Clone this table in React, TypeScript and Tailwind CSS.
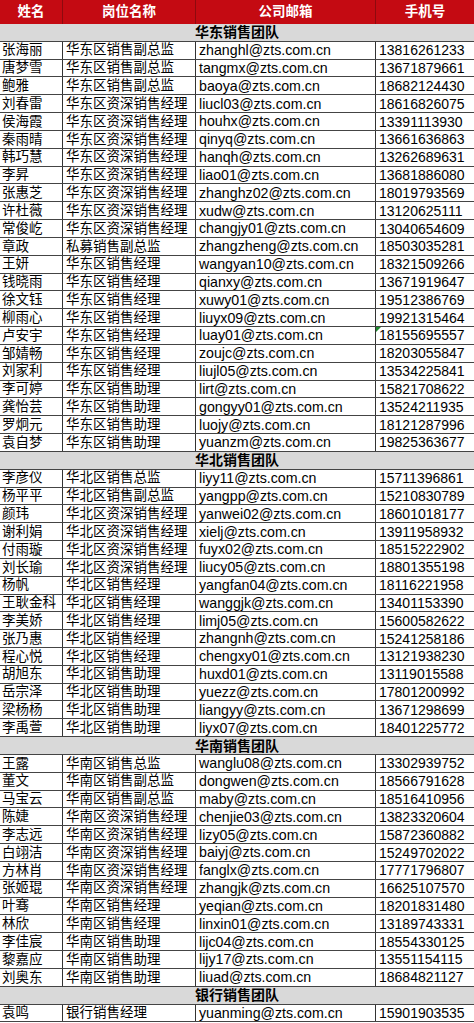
import React from "react";

type Row = [string, string, string, string];

const groups: { title: string; rows: Row[] }[] = [
  {
    title: "华东销售团队",
    rows: [
      ["张海丽", "华东区销售副总监", "zhanghl@zts.com.cn", "13816261233"],
      ["唐梦雪", "华东区销售副总监", "tangmx@zts.com.cn", "13671879661"],
      ["鲍雅", "华东区销售副总监", "baoya@zts.com.cn", "18682124430"],
      ["刘春雷", "华东区资深销售经理", "liucl03@zts.com.cn", "18616826075"],
      ["侯海霞", "华东区资深销售经理", "houhx@zts.com.cn", "13391113930"],
      ["秦雨晴", "华东区资深销售经理", "qinyq@zts.com.cn", "13661636863"],
      ["韩巧慧", "华东区资深销售经理", "hanqh@zts.com.cn", "13262689631"],
      ["李昇", "华东区资深销售经理", "liao01@zts.com.cn", "13681886080"],
      ["张惠芝", "华东区资深销售经理", "zhanghz02@zts.com.cn", "18019793569"],
      ["许杜薇", "华东区资深销售经理", "xudw@zts.com.cn", "13120625111"],
      ["常俊屹", "华东区资深销售经理", "changjy01@zts.com.cn", "13040654609"],
      ["章政", "私募销售副总监", "zhangzheng@zts.com.cn", "18503035281"],
      ["王妍", "华东区销售经理", "wangyan10@zts.com.cn", "18321509266"],
      ["钱晓雨", "华东区销售经理", "qianxy@zts.com.cn", "13671919647"],
      ["徐文钰", "华东区销售经理", "xuwy01@zts.com.cn", "19512386769"],
      ["柳雨心", "华东区销售经理", "liuyx09@zts.com.cn", "19921315464"],
      ["卢安宇", "华东区销售经理", "luay01@zts.com.cn", "18155695557"],
      ["邹婧畅", "华东区销售经理", "zoujc@zts.com.cn", "18203055847"],
      ["刘家利", "华东区销售经理", "liujl05@zts.com.cn", "13534225841"],
      ["李可婷", "华东区销售助理", "lirt@zts.com.cn", "15821708622"],
      ["龚怡芸", "华东区销售助理", "gongyy01@zts.com.cn", "13524211935"],
      ["罗炯元", "华东区销售助理", "luojy@zts.com.cn", "18121287996"],
      ["袁自梦", "华东区销售助理", "yuanzm@zts.com.cn", "19825363677"],
    ],
  },
  {
    title: "华北销售团队",
    rows: [
      ["李彦仪", "华北区销售总监", "liyy11@zts.com.cn", "15711396861"],
      ["杨平平", "华北区销售副总监", "yangpp@zts.com.cn", "15210830789"],
      ["颜玮", "华北区资深销售经理", "yanwei02@zts.com.cn", "18601018177"],
      ["谢利娟", "华北区资深销售经理", "xielj@zts.com.cn", "13911958932"],
      ["付雨璇", "华北区资深销售经理", "fuyx02@zts.com.cn", "18515222902"],
      ["刘长瑜", "华北区资深销售经理", "liucy05@zts.com.cn", "18801355198"],
      ["杨帆", "华北区销售经理", "yangfan04@zts.com.cn", "18116221958"],
      ["王耿金科", "华北区销售经理", "wanggjk@zts.com.cn", "13401153390"],
      ["李美娇", "华北区销售经理", "limj05@zts.com.cn", "15600582622"],
      ["张乃惠", "华北区销售经理", "zhangnh@zts.com.cn", "15241258186"],
      ["程心悦", "华北区销售经理", "chengxy01@zts.com.cn", "13121938230"],
      ["胡旭东", "华北区销售助理", "huxd01@zts.com.cn", "13119015588"],
      ["岳宗泽", "华北区销售助理", "yuezz@zts.com.cn", "17801200992"],
      ["梁杨杨", "华北区销售助理", "liangyy@zts.com.cn", "13671298699"],
      ["李禹萱", "华北区销售助理", "liyx07@zts.com.cn", "18401225772"],
    ],
  },
  {
    title: "华南销售团队",
    rows: [
      ["王露", "华南区销售总监", "wanglu08@zts.com.cn", "13302939752"],
      ["董文", "华南区销售副总监", "dongwen@zts.com.cn", "18566791628"],
      ["马宝云", "华南区销售副总监", "maby@zts.com.cn", "18516410956"],
      ["陈婕", "华南区资深销售经理", "chenjie03@zts.com.cn", "13823320604"],
      ["李志远", "华南区资深销售经理", "lizy05@zts.com.cn", "15872360882"],
      ["白翊洁", "华南区资深销售经理", "baiyj@zts.com.cn", "15249702022"],
      ["方林肖", "华南区资深销售经理", "fanglx@zts.com.cn", "17771796807"],
      ["张姬琨", "华南区资深销售经理", "zhangjk@zts.com.cn", "16625107570"],
      ["叶骞", "华南区销售经理", "yeqian@zts.com.cn", "18201831480"],
      ["林欣", "华南区销售经理", "linxin01@zts.com.cn", "13189743331"],
      ["李佳宸", "华南区销售助理", "lijc04@zts.com.cn", "18554330125"],
      ["黎嘉应", "华南区销售助理", "lijy17@zts.com.cn", "13551154115"],
      ["刘奥东", "华南区销售助理", "liuad@zts.com.cn", "18684821127"],
    ],
  },
  {
    title: "银行销售团队",
    rows: [["袁鸣", "银行销售经理", "yuanming@zts.com.cn", "15901903535"]],
  },
];

const ff = "font-['Liberation_Sans','Noto_Sans_CJK_SC',sans-serif]";

export default function App() {
  return (
    <div className={`w-[474px] h-[1023px] overflow-hidden bg-white text-black ${ff}`}>
      <div className="flex h-[24px] bg-[#c40a12] text-white font-bold text-[13.5px] leading-none">
        <div className="w-[63px] shrink-0 border-r border-[#8e0a0e] flex items-center justify-center">姓名</div>
        <div className="w-[133px] shrink-0 border-r border-[#8e0a0e] flex items-center justify-center">岗位名称</div>
        <div className="w-[180px] shrink-0 border-r border-[#8e0a0e] flex items-center justify-center">公司邮箱</div>
        <div className="flex-1 flex items-center justify-center">手机号</div>
      </div>
      {groups.map((g) => (
        <div key={g.title}>
          <div className="h-[17.84px] bg-[#d9d9d9] border-b border-[#444] flex items-center justify-center font-bold text-[14px] leading-none">
            {g.title}
          </div>
          {g.rows.map((r) => (
            <div key={r[0]} className="flex h-[17.84px] border-b border-[#444] leading-none">
              <div className="w-[63px] shrink-0 border-r border-[#333] flex items-center pl-[2px] text-[13.5px]">
                {r[0]}
              </div>
              <div className="w-[133px] shrink-0 border-r border-[#333] flex items-center pl-[3px] text-[13.5px]">
                {r[1]}
              </div>
              <div className="w-[180px] shrink-0 border-r border-[#333] flex items-center pl-[3px] text-[14.2px]">
                {r[2]}
              </div>
              <div className="relative flex-1 flex items-center pl-[3px] text-[14px]">
                {r[3] === "18155695557" && (
                  <span className="absolute left-0 top-0 w-0 h-0 border-t-[5px] border-r-[5px] border-t-[#1e8a2e] border-r-transparent" />
                )}
                {r[3]}
              </div>
            </div>
          ))}
        </div>
      ))}
    </div>
  );
}
